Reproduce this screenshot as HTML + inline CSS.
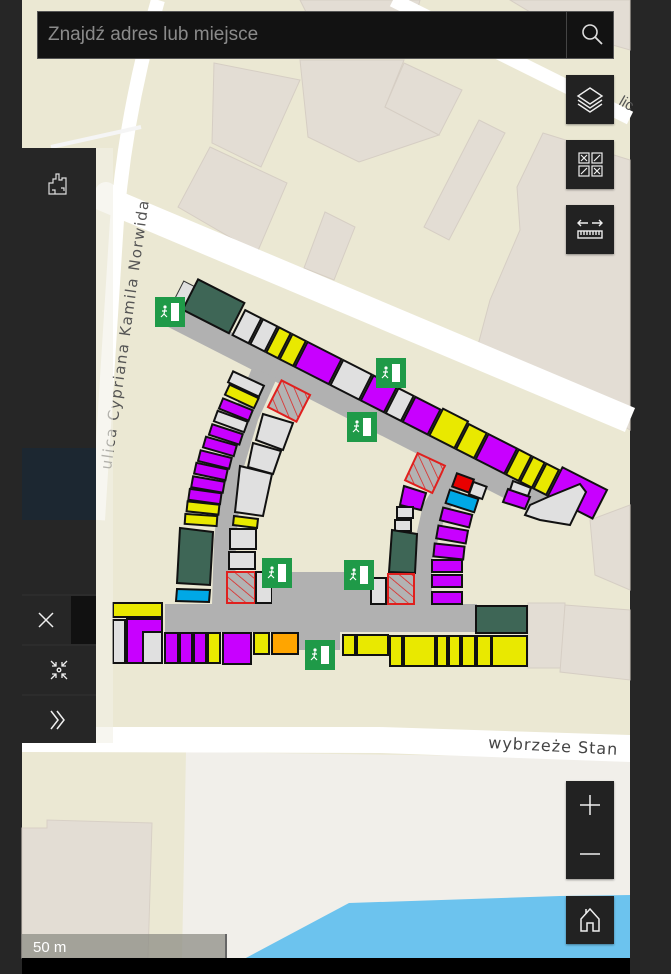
<!DOCTYPE html>
<html><head><meta charset="utf-8">
<style>
html,body{margin:0;padding:0;width:671px;height:974px;overflow:hidden;background:#252525;font-family:"Liberation Sans",sans-serif}
svg{position:absolute;left:0;top:0}
.btn{position:absolute;left:566px;width:48px;background:#222;box-shadow:0 1px 2px rgba(0,0,0,.4)}
</style></head><body>
<svg width="671" height="974" viewBox="0 0 671 974">
<defs>
<pattern id="h" width="8" height="8" patternUnits="userSpaceOnUse" patternTransform="rotate(-50)"><rect width="8" height="8" fill="#b3b3b3"/><line x1="0" y1="0" x2="0" y2="8" stroke="#e0201e" stroke-width="1.5"/></pattern>
<g id="ex"><rect width="30" height="30" fill="#1f9a48"/><rect x="16" y="6" width="8" height="18" fill="#fff"/><circle cx="10" cy="10" r="1.6" fill="#fff"/><path d="M10 12 L9 17 L6 20 M9 17 L12 20 M7 14 L12 14" stroke="#fff" stroke-width="1.2" fill="none"/></g>
</defs>
<rect x="0" y="0" width="22" height="974" fill="#262626"/>
<rect x="630" y="0" width="41" height="974" fill="#262626"/>
<rect x="22" y="0" width="608" height="958" fill="#ebe8d3"/>
<polygon points="186,752 630,758 630,958 182,958" fill="#f1efea"/>
<polygon points="22,828 47,828 47,820 152,823 148,958 22,958" fill="#e3ddd4" stroke="#d8d0c6"/>
<path d="M244,959 L349,903 L560,896 L630,895 L630,958 Z" fill="#6cc3ee"/>
<g fill="#e3ddd4" stroke="#d6cec4" stroke-width="1">
<polygon points="214,63 300,80 261,167 212,143"/>
<polygon points="300,60 404,60 385,107 439,135 359,162 308,137"/>
<polygon points="404,63 462,90 439,135 385,107"/>
<polygon points="210,147 287,183 257,253 178,207"/>
<polygon points="325,212 355,227 334,280 304,268"/>
<polygon points="479,120 505,133 449,240 424,227"/>
<polygon points="543,133 630,160 630,430 560,385 478,345 490,300 520,230 517,187"/>
<polygon points="300,0 420,0 410,40 320,40"/>
<polygon points="510,0 630,0 630,50 560,30"/>
<polygon points="590,520 630,505 630,590 595,575"/>
<polygon points="528,603 565,603 562,668 528,668"/>
<polygon points="565,605 630,610 630,680 560,672"/>
</g>
<path d="M96,195 L630,420" stroke="#fff" stroke-width="26"/>
<path d="M393,0 L630,118" stroke="#fff" stroke-width="14"/>
<path d="M158,0 Q126,110 117,220 L98,520" stroke="#fff" stroke-width="14" fill="none"/>
<circle cx="106" cy="193" r="11" fill="#fff"/>
<path d="M51,147 L141,127" stroke="#f5f5f5" stroke-width="4"/>
<polygon points="22,727 380,727 630,735 630,762 380,753 22,752" fill="#fff"/>
<text transform="translate(111,470) rotate(-82)" font-size="15" fill="#555" letter-spacing="1.5" font-family="DejaVu Sans,sans-serif">ulica Cypriana Kamila Norwida</text>
<text transform="translate(488,748) rotate(3)" font-size="16" fill="#444" letter-spacing="1" font-family="DejaVu Sans,sans-serif">wybrzeże Stan</text>
<text x="618" y="104" font-size="15" fill="#555" transform="rotate(30,618,104)">lic</text>

<g stroke="#111" stroke-width="2">
<g transform="translate(190,282) rotate(27)">
 <rect x="-5" y="26" width="425" height="24" fill="#b1b1b1" stroke="none"/>
 <rect x="-6" y="2" width="12" height="26" fill="#e0e0e0" stroke="#333" stroke-width="1"/>
 <rect x="6" y="-6" width="52" height="34" fill="#3e6656"/>
 <rect x="62" y="0" width="18" height="28" fill="#e0e0e0"/>
 <rect x="82" y="0" width="16" height="28" fill="#e0e0e0"/>
 <rect x="100" y="0" width="13" height="28" fill="#e9e900"/>
 <rect x="115" y="0" width="15" height="28" fill="#e9e900"/>
 <rect x="132" y="0" width="38" height="28" fill="#c800ff"/>
 <rect x="172" y="0" width="32" height="28" fill="#e0e0e0"/>
 <rect x="206" y="0" width="26" height="28" fill="#c800ff"/>
 <rect x="234" y="0" width="17" height="28" fill="#e0e0e0"/>
 <rect x="253" y="0" width="28" height="28" fill="#c800ff"/>
 <rect x="283" y="-2" width="28" height="30" fill="#e9e900"/>
 <rect x="313" y="0" width="20" height="28" fill="#e9e900"/>
 <rect x="335" y="0" width="32" height="28" fill="#c800ff"/>
 <rect x="369" y="0" width="14" height="28" fill="#e9e900"/>
 <rect x="385" y="0" width="13" height="28" fill="#e9e900"/>
 <rect x="400" y="0" width="14" height="28" fill="#e9e900"/>
 <rect x="416" y="-4" width="50" height="32" fill="#c800ff"/>
</g>
<polygon points="530,505 548,497 580,484 586,492 570,525 540,520 525,515" fill="#e0e0e0"/>
<polygon points="508,489 530,497 525,509 503,502" fill="#c800ff"/>
<polygon points="513,481 531,488 528,496 510,490" fill="#e0e0e0"/>
<polygon points="252,368 277,378 258,420 243,470 236,540 235,604 212,604 214,540 222,460 235,410" fill="#b1b1b1" stroke="none"/>
<g>
 <rect x="229" y="378" width="34" height="12" fill="#e0e0e0" transform="rotate(25,246,384)"/>
 <rect x="226" y="391" width="32" height="11" fill="#e9e900" transform="rotate(25,242,396)"/>
 <rect x="220" y="404" width="32" height="11" fill="#c800ff" transform="rotate(22,236,409)"/>
 <rect x="215" y="416" width="32" height="11" fill="#e0e0e0" transform="rotate(20,231,421)"/>
 <rect x="210" y="429" width="32" height="11" fill="#c800ff" transform="rotate(18,226,434)"/>
 <rect x="204" y="441" width="32" height="11" fill="#c800ff" transform="rotate(16,220,446)"/>
 <rect x="199" y="454" width="32" height="11" fill="#c800ff" transform="rotate(14,215,459)"/>
 <rect x="195" y="466" width="32" height="11" fill="#c800ff" transform="rotate(12,211,471)"/>
 <rect x="192" y="479" width="32" height="11" fill="#c800ff" transform="rotate(10,208,484)"/>
 <rect x="189" y="491" width="32" height="11" fill="#c800ff" transform="rotate(8,205,496)"/>
 <rect x="187" y="503" width="32" height="10" fill="#e9e900" transform="rotate(6,203,508)"/>
 <rect x="185" y="515" width="32" height="10" fill="#e9e900" transform="rotate(4,201,520)"/>
 <polygon points="180,528 213,532 210,585 177,583" fill="#3e6656"/>
 <polygon points="177,589 210,590 209,602 176,601" fill="#00a8e6"/>
</g>
<g>
 <rect x="273" y="386" width="32" height="30" fill="url(#h)" stroke="#e0201e" transform="rotate(27,289,401)"/>
 <polygon points="263,414 293,423 283,450 256,440" fill="#e0e0e0"/>
 <polygon points="253,443 281,451 273,474 248,467" fill="#e0e0e0"/>
 <polygon points="240,466 272,474 263,516 235,512" fill="#e0e0e0"/>
 <polygon points="234,516 258,519 257,528 233,525" fill="#e9e900"/>
 <rect x="230" y="529" width="26" height="20" fill="#e0e0e0"/>
 <rect x="229" y="552" width="26" height="17" fill="#e0e0e0"/>
 <rect x="227" y="572" width="28" height="31" fill="url(#h)" stroke="#e0201e"/>
 <rect x="256" y="572" width="16" height="31" fill="#e0e0e0"/>
</g>
<rect x="165" y="604" width="312" height="28" fill="#b1b1b1" stroke="none"/>
<rect x="272" y="572" width="98" height="34" fill="#b1b1b1" stroke="none"/>
<rect x="298" y="630" width="42" height="20" fill="#b1b1b1" stroke="none"/>
<rect x="113" y="603" width="49" height="14" fill="#e9e900"/>
<rect x="113" y="620" width="12" height="43" fill="#e0e0e0"/>
<rect x="127" y="619" width="35" height="44" fill="#c800ff"/>
<rect x="143" y="632" width="19" height="31" fill="#e0e0e0"/>
<rect x="165" y="633" width="13" height="30" fill="#c800ff"/>
<rect x="180" y="633" width="12" height="30" fill="#c800ff"/>
<rect x="194" y="633" width="12" height="30" fill="#c800ff"/>
<rect x="208" y="633" width="12" height="30" fill="#e9e900"/>
<rect x="223" y="633" width="28" height="31" fill="#c800ff"/>
<rect x="254" y="633" width="15" height="21" fill="#e9e900"/>
<rect x="272" y="633" width="26" height="21" fill="#ffa500"/>
<rect x="343" y="635" width="12" height="20" fill="#e9e900"/>
<rect x="357" y="635" width="31" height="20" fill="#e9e900"/>
<rect x="390" y="636" width="12" height="30" fill="#e9e900"/>
<rect x="404" y="636" width="31" height="30" fill="#e9e900"/>
<rect x="437" y="636" width="10" height="30" fill="#e9e900"/>
<rect x="449" y="636" width="11" height="30" fill="#e9e900"/>
<rect x="462" y="636" width="13" height="30" fill="#e9e900"/>
<rect x="477" y="636" width="14" height="30" fill="#e9e900"/>
<rect x="492" y="636" width="35" height="30" fill="#e9e900"/>
<rect x="476" y="606" width="51" height="27" fill="#3e6656"/>
<polygon points="448,464 472,470 444,520 432,560 432,606 412,606 413,550 423,505" fill="#b1b1b1" stroke="none"/>
<rect x="410" y="458" width="30" height="30" fill="url(#h)" stroke="#e0201e" transform="rotate(25,425,473)"/>
<polygon points="404,486 426,493 421,510 400,505" fill="#c800ff"/>
<rect x="397" y="507" width="16" height="11" fill="#e0e0e0"/>
<rect x="395" y="520" width="16" height="11" fill="#e0e0e0"/>
<polygon points="392,530 417,534 415,573 389,572" fill="#3e6656"/>
<rect x="388" y="574" width="26" height="30" fill="url(#h)" stroke="#e0201e"/>
<rect x="371" y="578" width="15" height="26" fill="#e0e0e0"/>
<rect x="454" y="476" width="18" height="14" fill="#e80000" transform="rotate(20,463,483)"/>
<rect x="471" y="484" width="14" height="13" fill="#e0e0e0" transform="rotate(20,478,490)"/>
<rect x="447" y="494" width="30" height="14" fill="#00a8e6" transform="rotate(18,462,501)"/>
<rect x="441" y="511" width="30" height="13" fill="#c800ff" transform="rotate(14,456,518)"/>
<rect x="437" y="528" width="30" height="13" fill="#c800ff" transform="rotate(10,452,535)"/>
<rect x="434" y="545" width="30" height="13" fill="#c800ff" transform="rotate(6,449,551)"/>
<rect x="432" y="560" width="30" height="12" fill="#c800ff"/>
<rect x="432" y="575" width="30" height="12" fill="#c800ff"/>
<rect x="432" y="592" width="30" height="12" fill="#c800ff"/>
</g>
<use href="#ex" x="155" y="297"/>
<use href="#ex" x="376" y="358"/>
<use href="#ex" x="347" y="412"/>
<use href="#ex" x="262" y="558"/>
<use href="#ex" x="344" y="560"/>
<use href="#ex" x="305" y="640"/>

<rect x="96" y="148" width="17" height="595" fill="#f2f0e6" opacity="0.6"/>
<rect x="22" y="148" width="74" height="595" fill="#262626"/>
<rect x="22" y="448" width="74" height="72" fill="#1c2731"/>
<rect x="71" y="596" width="25" height="48" fill="#111"/>
<line x1="22" y1="645" x2="96" y2="645" stroke="#333"/>
<line x1="22" y1="695" x2="96" y2="695" stroke="#333"/>
<line x1="22" y1="595" x2="96" y2="595" stroke="#333"/>
<path d="M49,194 V183 H53 V179 H56 V174 H59 V180 H62 V178 H66 V194 Z M52,190 h3 v4 M61,188 h3 v3" stroke="#ddd" stroke-width="1.2" fill="none"/>
<path d="M39,613 L53,627 M53,613 L39,627" stroke="#eee" stroke-width="1.5"/>
<g stroke="#eee" stroke-width="1.3" fill="none"><path d="M51,661 l5,5 M56,662 v4 h-4 M67,661 l-5,5 M62,662 v4 h4 M51,679 l5,-5 M56,678 v-4 h-4 M67,679 l-5,-5 M62,678 v-4 h4"/><circle cx="59" cy="670" r="1.8"/></g>
<path d="M51,711 L58,720 L51,729 M57,711 L64,720 L57,729" stroke="#eee" stroke-width="1.5" fill="none"/>
<rect x="22" y="934" width="205" height="24" fill="#8e8e86" opacity="0.75"/>
<rect x="225" y="934" width="2" height="24" fill="#666"/>
<text x="33" y="952" font-size="15" fill="#fff">50 m</text>
<rect x="22" y="958" width="608" height="16" fill="#000"/>
</svg>

<div style="position:absolute;left:37px;top:11px;width:575px;height:46px;background:#121212;border:1px solid #555">
 <div style="position:absolute;left:10px;top:12px;font-size:19px;color:#8a8a8a">Znajdź adres lub miejsce</div>
 <div style="position:absolute;left:528px;top:0;width:1px;height:46px;background:#444"></div>
 <svg style="left:543px;top:11px" width="24" height="24"><circle cx="9" cy="9" r="7" stroke="#ddd" stroke-width="1.6" fill="none"/><path d="M14,14 L21,21" stroke="#ddd" stroke-width="1.8"/></svg>
</div>
<div class="btn" style="top:75px;height:49px"><svg width="48" height="49"><g stroke="#eee" stroke-width="1.4" fill="none"><path d="M24,13 L36,21 L24,29 L12,21 Z"/><path d="M12,25 L24,33 L36,25"/><path d="M12,29 L24,37 L36,29"/></g></svg></div>
<div class="btn" style="top:140px;height:49px"><svg width="48" height="49"><g stroke="#eee" stroke-width="1.2" fill="none"><rect x="13" y="13" width="10" height="10"/><rect x="26" y="13" width="10" height="10"/><rect x="13" y="26" width="10" height="10"/><rect x="26" y="26" width="10" height="10"/><path d="M15,15 l6,6 M21,15 l-6,6 M34,15 l-6,6 M15,34 l6,-6 M28,28 l6,6 M34,28 l-6,6"/></g></svg></div>
<div class="btn" style="top:205px;height:49px"><svg width="48" height="49"><g stroke="#eee" stroke-width="1.4" fill="none"><path d="M12,18 H22 M15,15 l-3,3 3,3 M26,18 H36 M33,15 l3,3 -3,3"/><rect x="12" y="26" width="24" height="7"/><path d="M15,26 v4 M18,26 v4 M21,26 v4 M24,26 v4 M27,26 v4 M30,26 v4 M33,26 v4"/></g></svg></div>
<div class="btn" style="top:781px;height:98px"><svg width="48" height="98"><path d="M24,14 V34 M14,24 H34 M14,73 H34" stroke="#eee" stroke-width="1.5"/></svg></div>
<div class="btn" style="top:896px;height:48px"><svg width="48" height="48"><path d="M15,35 V23 L24,13 L33,23 V35 H27 V27 H21 V35 Z M20,18 V13" stroke="#eee" stroke-width="1.5" fill="none"/></svg></div>
</body></html>
